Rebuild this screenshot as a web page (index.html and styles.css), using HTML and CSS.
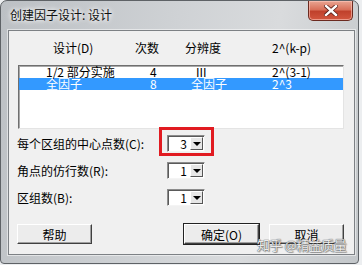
FILE: index.html
```html
<!DOCTYPE html>
<html lang="zh-CN">
<head>
    <meta charset="UTF-8">
    <title>创建因子设计: 设计</title>
    <link rel="stylesheet" href="styles.css">
</head>
<body>
    <div class="window">
        <div class="titlebar">
            <span class="title">创建因子设计: 设计</span>
            <div class="close">
                <svg width="14" height="11" viewBox="0 0 14 11">
                    <path d="M2 1 L12 10 M12 1 L2 10" stroke="#5a1f18" stroke-width="4" stroke-linecap="square"/>
                    <path d="M2 1 L12 10 M12 1 L2 10" stroke="#fff" stroke-width="2.4" stroke-linecap="square"/>
                </svg>
            </div>
        </div>

        <div class="client">
            <div class="head">
                <span>设计(D)</span>
                <span>次数</span>
                <span>分辨度</span>
                <span>2^(k-p)</span>
            </div>

            <div class="listbox">
                <div class="row">
                    <span>1/2 部分实施</span>
                    <span>4</span>
                    <span class="res">III</span>
                    <span>2^(3-1)</span>
                </div>
                <div class="row selected">
                    <span>全因子</span>
                    <span>8</span>
                    <span>全因子</span>
                    <span>2^3</span>
                </div>
            </div>

            <div class="form">
                <label>每个区组的中心点数(C):</label>
                <div class="combo marked"><span class="val">3</span><span class="drop"></span></div>
                <label>角点的仿行数(R):</label>
                <div class="combo"><span class="val">1</span><span class="drop"></span></div>
                <label>区组数(B):</label>
                <div class="combo"><span class="val">1</span><span class="drop"></span></div>
            </div>

            <div class="buttons">
                <button class="btn">帮助</button>
                <span class="spacer"></span>
                <button class="btn default">确定(O)</button>
                <button class="btn">取消</button>
            </div>
        </div>

        <div class="watermark">知乎 @精益质量</div>
    </div>
</body>
</html>
```

FILE: styles.css
```css
* {
    box-sizing: border-box;
}

body {
    margin: 0;
    background: #eceef0;
    font-family: "Noto Sans CJK SC", "Noto Sans", sans-serif;
    font-size: 12px;
    color: #000;
}

.window {
    position: relative;
    width: 359px;
    height: 264px;
    padding: 0 3px 8px 7px;
    border: 1px solid #5e6266;
    border-radius: 7px 7px 4px 4px;
    background: linear-gradient(100deg, #bcc0c4 0%, #cfd2d5 45%, #d9dbdd 70%, #c3c7ca 100%);
    display: flex;
    flex-direction: column;
    overflow: hidden;
}

.titlebar {
    height: 29px;
    display: flex;
    align-items: flex-start;
    padding-left: 2px;
}

.title {
    line-height: 28px;
    font-size: 12px;
    color: #111;
    text-shadow: 0 0 4px #fff, 0 0 6px #fff;
}

.close {
    margin-left: auto;
    margin-right: 2px;
    width: 45px;
    height: 20px;
    border: 1px solid #6b2a20;
    border-top: none;
    border-radius: 0 0 5px 5px;
    background: linear-gradient(#e9a592 0%, #d9705a 45%, #c0412c 55%, #d2563f 100%);
    box-shadow: inset 0 0 0 1px rgba(255, 200, 190, 0.6);
    display: flex;
    align-items: center;
    justify-content: center;
}

.client {
    flex: 1;
    background: #f0f0f0;
    border: 1px solid #7d8185;
    box-shadow: 0 0 0 1px rgba(255, 255, 255, 0.5);
    display: flex;
    flex-direction: column;
}

.head {
    margin-top: 9px;
    height: 16px;
    line-height: 16px;
    display: grid;
    grid-template-columns: 82px 50px 87px 1fr;
    padding-left: 44px;
}

.listbox {
    margin: 9px 10px 0 9px;
    height: 64px;
    background: #fff;
    border: 1px solid;
    border-color: #6f6f6f #e4e4e4 #e4e4e4 #6f6f6f;
    box-shadow: inset 1px 1px 0 #a8a8a8;
}

.row {
    height: 12px;
    line-height: 12px;
    display: grid;
    grid-template-columns: 104px 41px 81px 1fr;
    padding-left: 27px;
    white-space: nowrap;
}

.row .res {
    padding-left: 5px;
}

.row.selected {
    background: #3399ff;
    color: #fff;
}

.form {
    margin-top: 6px;
    padding-left: 8px;
    display: grid;
    grid-template-columns: 150px 38px;
    grid-auto-rows: 17px;
    row-gap: 10px;
    align-items: center;
}

.form label {
    line-height: 17px;
    white-space: nowrap;
}

.combo {
    position: relative;
    height: 17px;
    background: #fff;
    border: 1px solid;
    border-color: #8c8c8c #f4f4f4 #f4f4f4 #8c8c8c;
    box-shadow: inset 1px 1px 0 #5a5a5a;
    display: flex;
    align-items: center;
    justify-content: flex-end;
    padding: 1px 1px 1px 2px;
}

.combo .val {
    line-height: 13px;
    padding-right: 3px;
}

.combo .drop {
    width: 13px;
    height: 13px;
    background: #e6e6e6;
    border: 1px solid;
    border-color: #fff #555 #555 #fff;
    display: flex;
    align-items: center;
    justify-content: center;
}

.combo .drop::after {
    content: "";
    border-left: 4px solid transparent;
    border-right: 4px solid transparent;
    border-top: 4px solid #000;
}

.combo.marked::before {
    content: "";
    position: absolute;
    left: -9px;
    right: -10px;
    top: -9px;
    bottom: -5px;
    border: 3px solid #e11b21;
}

.buttons {
    margin-top: 18px;
    padding: 0 10px 0 8px;
    display: flex;
    gap: 10px;
}

.spacer {
    flex: 1;
}

.btn {
    width: 75px;
    height: 20px;
    padding: 0;
    font-family: inherit;
    font-size: 12px;
    background: #ececec;
    border: 1px solid;
    border-color: #fff #404040 #404040 #fff;
    box-shadow: inset -1px -1px 0 #a0a0a0;
    color: #000;
}

.btn.default {
    outline: 1px solid #222;
}

.watermark {
    position: absolute;
    left: 256px;
    top: 234px;
    font-size: 13px;
    letter-spacing: -0.5px;
    color: rgba(255, 255, 255, 0.9);
    text-shadow: 0 0 1px #555, 0 0 1px #555, 1px 1px 1px rgba(0, 0, 0, 0.35);
    white-space: nowrap;
}
```
